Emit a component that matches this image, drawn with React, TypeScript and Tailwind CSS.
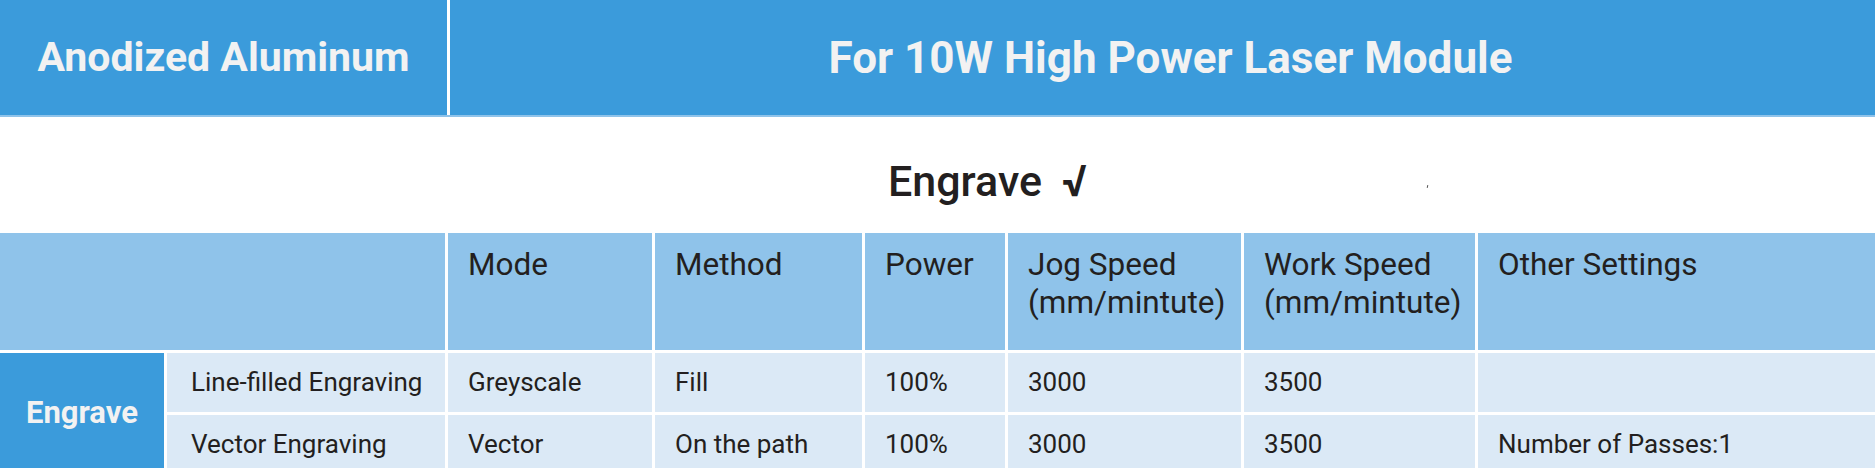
export default function App() {
  const font = { fontFamily: "Roboto, 'Liberation Sans', sans-serif" };
  const headCell = "bg-[#8fc3ea] pl-5 pt-[13px] text-[31.5px] leading-[38px] font-normal text-[#231f20]";
  const bodyCell = "bg-[#dbe9f6] pl-5 flex items-center text-[26px] text-[#231f20]";

  return (
    <div className="w-[1875px] h-[468px] overflow-hidden bg-white" style={font}>
      {/* top banner */}
      <div className="flex h-[117px] gap-[3px] bg-white border-b-2 border-[#8fc3ea]">
        <div className="w-[447px] bg-[#3b9bdb] flex items-center justify-center text-[41px] font-bold text-[#f2f2f2]">
          Anodized Aluminum
        </div>
        <div className="flex-1 bg-[#3b9bdb] flex items-center justify-center pl-4 text-[44px] font-bold text-[#f2f2f2]">
          For 10W High Power Laser Module
        </div>
      </div>

      {/* section title */}
      <div className="h-[116px] flex items-center pl-[888px] pt-3 relative">
        <span className="text-[43px] font-medium text-[#231f20]">Engrave</span>
        <span className="ml-5 text-[44px] font-bold text-[#231f20]">√</span>
        <span className="absolute left-[1427px] top-[68px] w-[1px] h-[3px] bg-[#555] rotate-12" />
      </div>

      {/* settings table */}
      <div className="grid grid-cols-[164px_278px_204px_207px_140px_233px_231px_1fr] grid-rows-[117px_59px_59px] gap-[3px] bg-white">
        <div className="col-span-2 bg-[#8fc3ea]" />
        <div className={headCell}>Mode</div>
        <div className={headCell}>Method</div>
        <div className={headCell}>Power</div>
        <div className={headCell}>
          Jog Speed
          <br />
          (mm/mintute)
        </div>
        <div className={headCell}>
          Work Speed
          <br />
          (mm/mintute)
        </div>
        <div className={headCell}>Other Settings</div>

        <div className="row-span-2 bg-[#3b9bdb] flex items-center justify-center text-[31px] font-bold text-[#f2f2f2]">
          Engrave
        </div>
        <div className={bodyCell + " pl-6"}>Line-filled Engraving</div>
        <div className={bodyCell}>Greyscale</div>
        <div className={bodyCell}>Fill</div>
        <div className={bodyCell}>100%</div>
        <div className={bodyCell}>3000</div>
        <div className={bodyCell}>3500</div>
        <div className={bodyCell}></div>

        <div className={bodyCell + " pl-6"}>Vector Engraving</div>
        <div className={bodyCell}>Vector</div>
        <div className={bodyCell}>On the path</div>
        <div className={bodyCell}>100%</div>
        <div className={bodyCell}>3000</div>
        <div className={bodyCell}>3500</div>
        <div className={bodyCell}>Number of Passes:1</div>
      </div>
    </div>
  );
}
